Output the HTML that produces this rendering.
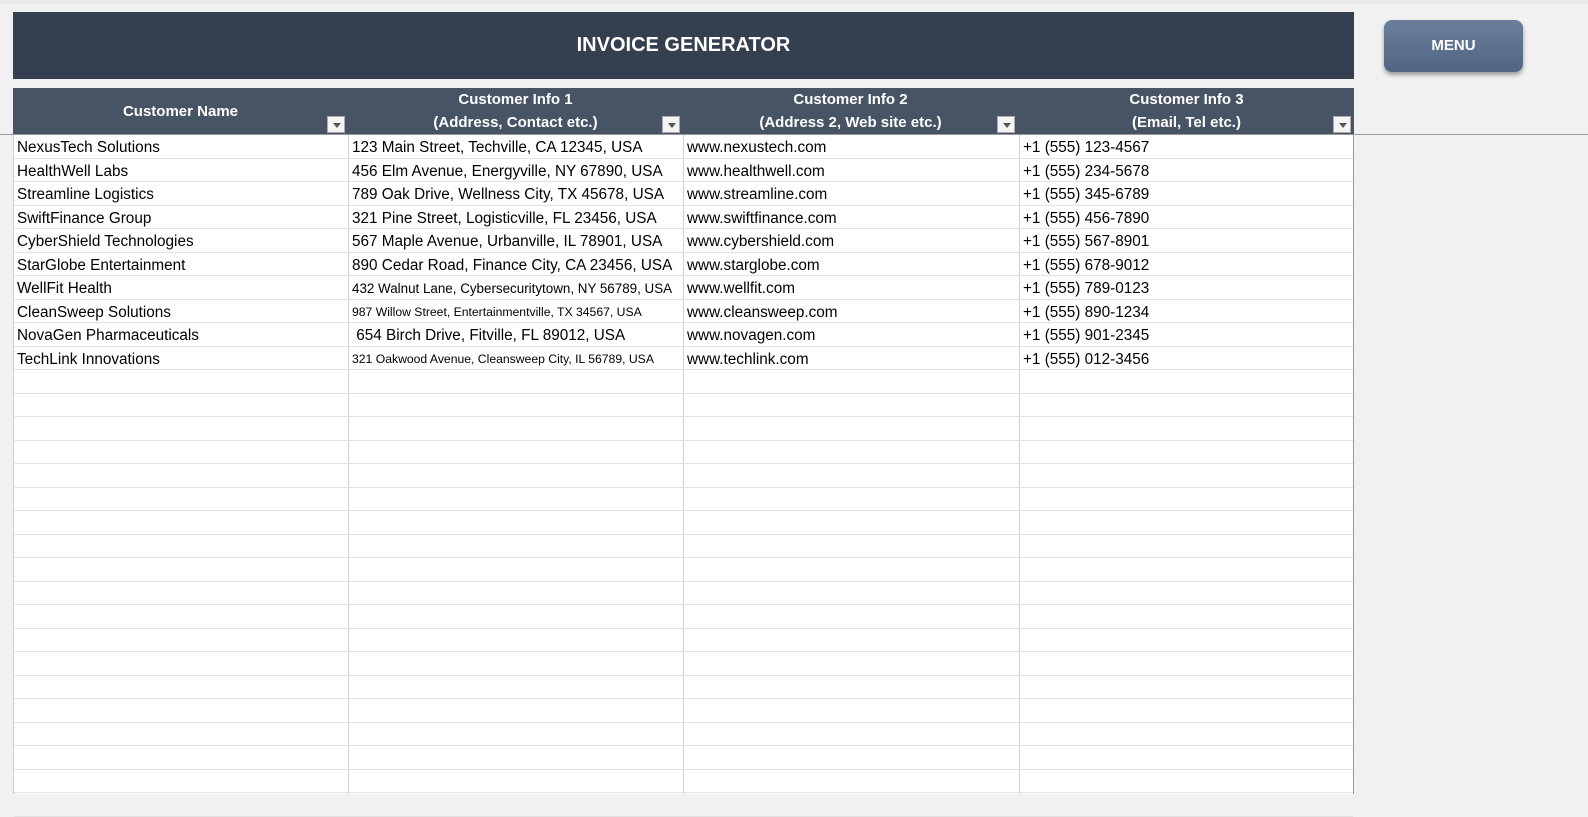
<!DOCTYPE html>
<html><head><meta charset="utf-8"><style>
*{margin:0;padding:0;box-sizing:border-box}
body{width:1588px;height:794px;background:#f1f1f1;position:relative;overflow:hidden;font-family:"Liberation Sans",sans-serif}
.top{position:absolute;left:0;top:0;width:1588px;height:4px;background:#e6ebea}
.hline{position:absolute;left:0;top:134px;width:1588px;height:1px;background:#9a9a9a}
.title{position:absolute;left:13px;top:12px;width:1341px;height:67px;background:#343f4f;color:#fff;font-weight:bold;font-size:20px;text-align:center;line-height:67px}
.menu{position:absolute;left:1384px;top:20px;width:139px;height:52px;border-radius:8px;background:linear-gradient(#6a7f9b,#4f6582);box-shadow:0 3px 4px rgba(0,0,0,.35);color:#fff;font-weight:bold;font-size:15px;text-align:center;line-height:52px}
.hdr{position:absolute;left:13px;top:88px;width:1341px;height:47px;background:#475465}
.hc{position:absolute;top:0;height:47px;width:335px;color:#fff;font-weight:bold;font-size:15px;text-align:center}
.dd{position:absolute;right:3px;bottom:2px;width:18px;height:17px;background:#f4f4f4;border:1px solid #aaa}
.dd:after{content:"";position:absolute;left:5px;top:6px;border-left:4px solid transparent;border-right:4px solid transparent;border-top:5px solid #555}
.grid{position:absolute;left:13px;top:135px;width:1341px;height:659px;background:#fff;border-left:1px solid #ccc;border-right:1px solid #999}
.row{height:23.5px;border-bottom:1px solid #e2e2e2;position:relative;font-size:15.3px;color:#000;line-height:25px;white-space:nowrap}
.row span{position:absolute;top:0;padding-left:3px;overflow:hidden;width:335px}
.vl{position:absolute;top:0;bottom:0;width:1px;background:#d0d0d0}
.sm{font-size:12.2px}
</style></head><body>
<div class="top"></div>
<div class="title">INVOICE GENERATOR</div>
<div class="menu">MENU</div>
<div class="hdr">
<div class="hc" style="left:0;line-height:47px">Customer Name<div class="dd"></div></div>
<div class="hc" style="left:335px;line-height:23px">Customer Info 1<br>(Address, Contact etc.)<div class="dd"></div></div>
<div class="hc" style="left:670px;line-height:23px">Customer Info 2<br>(Address 2, Web site etc.)<div class="dd"></div></div>
<div class="hc" style="left:1006px;line-height:23px">Customer Info 3<br>(Email, Tel etc.)<div class="dd"></div></div>
</div>
<div class="hline"></div>
<div class="grid">
<div class="vl" style="left:334px"></div><div class="vl" style="left:669px"></div><div class="vl" style="left:1005px"></div>
<div class="row"><span style="left:0">NexusTech Solutions</span><span style="left:335px">123 Main Street, Techville, CA 12345, USA</span><span style="left:670px">www.nexustech.com</span><span style="left:1006px">+1 (555) 123-4567</span></div>
<div class="row"><span style="left:0">HealthWell Labs</span><span style="left:335px">456 Elm Avenue, Energyville, NY 67890, USA</span><span style="left:670px">www.healthwell.com</span><span style="left:1006px">+1 (555) 234-5678</span></div>
<div class="row"><span style="left:0">Streamline Logistics</span><span style="left:335px">789 Oak Drive, Wellness City, TX 45678, USA</span><span style="left:670px">www.streamline.com</span><span style="left:1006px">+1 (555) 345-6789</span></div>
<div class="row"><span style="left:0">SwiftFinance Group</span><span style="left:335px">321 Pine Street, Logisticville, FL 23456, USA</span><span style="left:670px">www.swiftfinance.com</span><span style="left:1006px">+1 (555) 456-7890</span></div>
<div class="row"><span style="left:0">CyberShield Technologies</span><span style="left:335px">567 Maple Avenue, Urbanville, IL 78901, USA</span><span style="left:670px">www.cybershield.com</span><span style="left:1006px">+1 (555) 567-8901</span></div>
<div class="row"><span style="left:0">StarGlobe Entertainment</span><span style="left:335px">890 Cedar Road, Finance City, CA 23456, USA</span><span style="left:670px">www.starglobe.com</span><span style="left:1006px">+1 (555) 678-9012</span></div>
<div class="row"><span style="left:0">WellFit Health</span><span style="left:335px;font-size:13.4px">432 Walnut Lane, Cybersecuritytown, NY 56789, USA</span><span style="left:670px">www.wellfit.com</span><span style="left:1006px">+1 (555) 789-0123</span></div>
<div class="row"><span style="left:0">CleanSweep Solutions</span><span style="left:335px" class="sm">987 Willow Street, Entertainmentville, TX 34567, USA</span><span style="left:670px">www.cleansweep.com</span><span style="left:1006px">+1 (555) 890-1234</span></div>
<div class="row"><span style="left:0">NovaGen Pharmaceuticals</span><span style="left:335px">&nbsp;654 Birch Drive, Fitville, FL 89012, USA</span><span style="left:670px">www.novagen.com</span><span style="left:1006px">+1 (555) 901-2345</span></div>
<div class="row"><span style="left:0">TechLink Innovations</span><span style="left:335px" class="sm">321 Oakwood Avenue, Cleansweep City, IL 56789, USA</span><span style="left:670px">www.techlink.com</span><span style="left:1006px">+1 (555) 012-3456</span></div>
<div class="row"></div><div class="row"></div><div class="row"></div><div class="row"></div><div class="row"></div><div class="row"></div><div class="row"></div><div class="row"></div><div class="row"></div><div class="row"></div><div class="row"></div><div class="row"></div><div class="row"></div><div class="row"></div><div class="row"></div><div class="row"></div><div class="row"></div><div class="row"></div><div class="row"></div>
</div>
</body></html>
